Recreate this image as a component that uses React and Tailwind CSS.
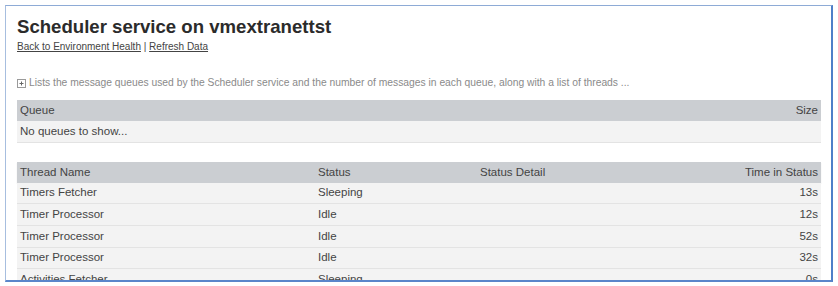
import React from 'react';

const threads = [
  { name: 'Timers Fetcher', status: 'Sleeping', detail: '', time: '13s' },
  { name: 'Timer Processor', status: 'Idle', detail: '', time: '12s' },
  { name: 'Timer Processor', status: 'Idle', detail: '', time: '52s' },
  { name: 'Timer Processor', status: 'Idle', detail: '', time: '32s' },
  { name: 'Activities Fetcher', status: 'Sleeping', detail: '', time: '0s' },
];

const cols = 'grid grid-cols-[298px_162px_1fr_auto] items-center';

const PlusBox = () => (
  <svg width="9" height="9" viewBox="0 0 9 9" className="shrink-0">
    <rect x="0.5" y="0.5" width="8" height="8" fill="#fff" stroke="#9a9a9a" />
    <path d="M2.5 4.5h4M4.5 2.5v4" stroke="#666" strokeWidth="1" />
  </svg>
);

export default function App() {
  return (
    <div className="w-[838px] h-[286px] bg-white p-[5px] font-['Liberation_Sans',Arial,sans-serif]">
      <div className="h-[277px] w-[828px] overflow-hidden border border-t-[#8eabd6] border-l-[#a7bedf] border-r-2 border-r-[#4f7fc8] border-b-2 border-b-[#5a86ca] pl-[11px] pr-[10px]">
        <h1 className="mt-[9px] text-[18.6px] leading-[24px] font-bold text-[#2b2b2b]">
          Scheduler service on vmextranettst
        </h1>
        <div className="mt-[1px] text-[10px] leading-[14px] text-[#444]">
          <a className="underline">Back to Environment Health</a>
          {' | '}
          <a className="underline">Refresh Data</a>
        </div>

        <div className="mt-[22px] flex items-center gap-[3px] text-[10.3px] leading-[14px] text-[#8a8a8a]">
          <PlusBox />
          <span>
            Lists the message queues used by the Scheduler service and the number of messages in each queue, along with a list of threads ...
          </span>
        </div>

        <div className="mt-[10px] text-[11.5px] text-[#444]">
          <div className="flex h-[21px] items-center justify-between bg-[#cbced2] px-[3px]">
            <span>Queue</span>
            <span>Size</span>
          </div>
          <div className="flex h-[21.5px] items-center border-b border-[#e3e3e3] bg-[#f3f3f3] px-[3px]">
            No queues to show...
          </div>
        </div>

        <div className="mt-[19.5px] text-[11.5px] text-[#444]">
          <div className={`${cols} h-[20.7px] bg-[#cbced2] px-[3px] shadow-[0_1px_1px_rgba(0,0,0,0.12)]`}>
            <span>Thread Name</span>
            <span>Status</span>
            <span>Status Detail</span>
            <span className="text-right">Time in Status</span>
          </div>
          {threads.map((t, i) => (
            <div
              key={i}
              className={`${cols} h-[21.65px] border-b border-[#e3e3e3] bg-[#f3f3f3] px-[3px]`}
            >
              <span>{t.name}</span>
              <span>{t.status}</span>
              <span>{t.detail}</span>
              <span className="text-right">{t.time}</span>
            </div>
          ))}
        </div>
      </div>
    </div>
  );
}
